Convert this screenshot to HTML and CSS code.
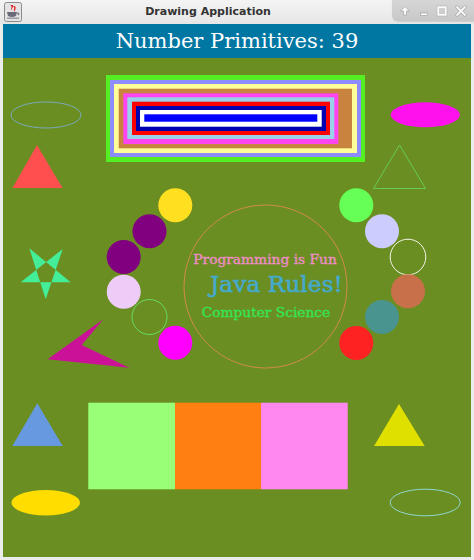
FILE: index.html
```html
<!DOCTYPE html>
<html>
<head>
<meta charset="utf-8">
<title>Drawing Application</title>
<link rel="stylesheet" href="styles.css">
</head>
<body>
<div class="window">
  <div class="titlebar">
    <div class="app-icon">
      <svg width="18" height="20" viewBox="0 0 18 20">
        <rect x="0.5" y="0.5" width="17" height="19" rx="2" fill="#e4e4e4" stroke="#8a8a8a"/>
        <path d="M6 3 C10 5 5 7 8 9 C6 7 10 6 9 3 Z" fill="#d0202a"/>
        <path d="M9 4 C12 6 8 8 11 10 C10 8 13 7 11 4 Z" fill="#e03030"/>
        <path d="M3 10 L13 10 L12 14 Q8 16 4 14 Z" fill="#6a6a78"/>
        <path d="M13 11 Q16 11 14 13" fill="none" stroke="#6a6a78" stroke-width="1.2"/>
        <rect x="3" y="15.5" width="12" height="1.5" fill="#9a9aa6"/>
      </svg>
    </div>
    <div class="title">Drawing Application</div>
    <div class="controls">
      <svg class="ctl" width="12" height="12" viewBox="0 0 12 12"><path d="M6 1.5 L10.5 6 L7.5 6 L7.5 10 L4.5 10 L4.5 6 L1.5 6 Z" fill="#fafafa" stroke="#9a9a9a" stroke-width="0.6"/></svg>
      <svg class="ctl" width="12" height="12" viewBox="0 0 12 12"><rect x="2.5" y="8" width="7" height="2.5" fill="#fafafa" stroke="#9a9a9a" stroke-width="0.6"/></svg>
      <svg class="ctl" width="12" height="12" viewBox="0 0 12 12"><rect x="2" y="2" width="8" height="8" fill="none" stroke="#fafafa" stroke-width="2"/><rect x="1" y="1" width="10" height="10" fill="none" stroke="#a8a8a8" stroke-width="0.5"/></svg>
      <svg class="ctl" width="12" height="12" viewBox="0 0 12 12"><path d="M2 2 L10 10 M10 2 L2 10" stroke="#9a9a9a" stroke-width="3" stroke-linecap="round"/><path d="M2 2 L10 10 M10 2 L2 10" stroke="#fafafa" stroke-width="1.8" stroke-linecap="round"/></svg>
    </div>
  </div>
  <div class="frame">
    <div class="header">Number Primitives: 39</div>
    <svg class="canvas" width="468" height="499" viewBox="3 58 468 499">
      <rect x="3" y="58" width="468" height="499" fill="#6b8e23"/>

      <!-- nested rectangles -->
      <rect x="106" y="75" width="259" height="87" fill="#55ee22"/>
      <rect x="110" y="80" width="251" height="77" fill="#8c8cff"/>
      <rect x="114" y="84" width="243" height="69" fill="#ffff99"/>
      <rect x="118.7" y="88.7" width="233.3" height="59.6" fill="#c8843e"/>
      <rect x="123.3" y="93.3" width="215" height="50.7" fill="#ff44f0"/>
      <rect x="127.3" y="97.3" width="207" height="41.7" fill="#99d0ea"/>
      <rect x="132" y="101.7" width="198" height="33.3" fill="#ff0000"/>
      <rect x="136" y="106" width="190" height="25" fill="#0000b0"/>
      <rect x="140" y="110" width="181.7" height="16.7" fill="#ffffff"/>
      <rect x="144.3" y="114.3" width="173" height="7.4" fill="#0000ff"/>

      <!-- top corners -->
      <ellipse cx="46" cy="115" rx="35" ry="13" fill="none" stroke="#7aa9b8" stroke-width="1"/>
      <polygon points="37,145 12.5,188 62.5,188" fill="#ff4f4f"/>
      <ellipse cx="425.3" cy="114.8" rx="34.7" ry="12.5" fill="#ff11ee"/>
      <polygon points="399.5,145 373.5,188.5 425.5,188.5" fill="none" stroke="#66cc55" stroke-width="1"/>

      <!-- star and arrow -->
      <polygon points="29.3,248.3 70.7,282.3 20.7,282.3 62.7,249 45.7,299.3" fill="#44ee99" fill-rule="evenodd"/>
      <polygon points="103.3,319.3 81.7,345 129.3,367.7 47.7,359.3" fill="#cc1199"/>

      <!-- left circles -->
      <circle cx="175.3" cy="205.3" r="17" fill="#ffe020"/>
      <circle cx="149.5" cy="231.3" r="17" fill="#800080"/>
      <circle cx="123.7" cy="257" r="17" fill="#800080"/>
      <circle cx="123.7" cy="291.7" r="17" fill="#eeccf8"/>
      <circle cx="149.5" cy="317" r="17.5" fill="none" stroke="#66dd66" stroke-width="1"/>
      <circle cx="175.3" cy="342.8" r="17" fill="#ff00ff"/>

      <!-- right circles -->
      <circle cx="356.3" cy="205.3" r="17" fill="#66ff55"/>
      <circle cx="382" cy="231.3" r="17" fill="#ccccff"/>
      <circle cx="408" cy="257" r="17.8" fill="none" stroke="#f4f4e8" stroke-width="1"/>
      <circle cx="408" cy="291.3" r="17" fill="#c8704a"/>
      <circle cx="382" cy="317" r="17" fill="#4a9490"/>
      <circle cx="356.3" cy="343" r="17" fill="#ff2222"/>

      <!-- center circle + text -->
      <circle cx="265.5" cy="286.5" r="81.5" fill="none" stroke="#d08c48" stroke-width="1"/>
      <text class="t-prog" x="193.3" y="264.3" textLength="143.5" lengthAdjust="spacingAndGlyphs">Programming is Fun</text>
      <text class="t-java" x="210" y="291.7" textLength="133" lengthAdjust="spacingAndGlyphs">Java Rules!</text>
      <text class="t-cs" x="201.7" y="316.5" textLength="128.5" lengthAdjust="spacingAndGlyphs">Computer Science</text>

      <!-- bottom -->
      <polygon points="37.3,403.3 12.3,446 62.7,446" fill="#6699e0"/>
      <rect x="88.3" y="402.7" width="86.7" height="86.6" fill="#99ff77"/>
      <rect x="175" y="402.7" width="86" height="86.6" fill="#ff8010"/>
      <rect x="261" y="402.7" width="86.7" height="86.6" fill="#ff88ee"/>
      <polygon points="399,404 374,446 424.7,446" fill="#e0e000"/>
      <ellipse cx="45.7" cy="502.7" rx="34.3" ry="12.7" fill="#ffdd00"/>
      <ellipse cx="425.2" cy="502.5" rx="35" ry="13.3" fill="none" stroke="#8fd8d0" stroke-width="1"/>
    </svg>
  </div>
</div>
</body>
</html>
```

FILE: styles.css
```css
html, body {
  margin: 0;
  padding: 0;
}
body {
  width: 474px;
  height: 560px;
  background: #ebebeb;
  overflow: hidden;
}
.window {
  width: 474px;
  height: 560px;
  display: flex;
  flex-direction: column;
  background: #ececec;
}
.titlebar {
  height: 24px;
  display: flex;
  align-items: flex-start;
  background: linear-gradient(#f4f4f4, #e6e6e6);
}
.app-icon {
  width: 24px;
  padding: 2px 0 0 4px;
  box-sizing: border-box;
  display: flex;
}
.title {
  flex: 1;
  text-align: center;
  font-family: "DejaVu Sans", sans-serif;
  font-weight: bold;
  font-size: 11px;
  line-height: 24px;
  color: #333333;
}
.controls {
  width: 82px;
  height: 21px;
  background: linear-gradient(#d6d6d6, #c8c8c8);
  border-bottom-left-radius: 6px;
  display: flex;
  align-items: center;
  justify-content: space-around;
  padding: 0 4px 0 4px;
  box-sizing: border-box;
  box-shadow: 0 1px 1px rgba(0,0,0,0.12);
}
.ctl {
  display: block;
}
.frame {
  padding: 0 3px;
  display: flex;
  flex-direction: column;
}
.header {
  height: 34px;
  line-height: 34px;
  background: #0077a3;
  color: #ffffff;
  text-align: center;
  font-family: "DejaVu Serif", serif;
  font-size: 21px;
}
.canvas {
  display: block;
}
.t-prog {
  font-family: "DejaVu Serif", serif;
  font-size: 12.5px;
  fill: #f08cc8;
  stroke: #f08cc8;
  stroke-width: 0.3px;
}
.t-java {
  font-family: "DejaVu Serif", serif;
  font-size: 21.5px;
  fill: #44aacc;
  stroke: #44aacc;
  stroke-width: 0.5px;
}
.t-cs {
  font-family: "DejaVu Serif", serif;
  font-size: 12.5px;
  fill: #33e655;
  stroke: #33e655;
  stroke-width: 0.3px;
}
```
